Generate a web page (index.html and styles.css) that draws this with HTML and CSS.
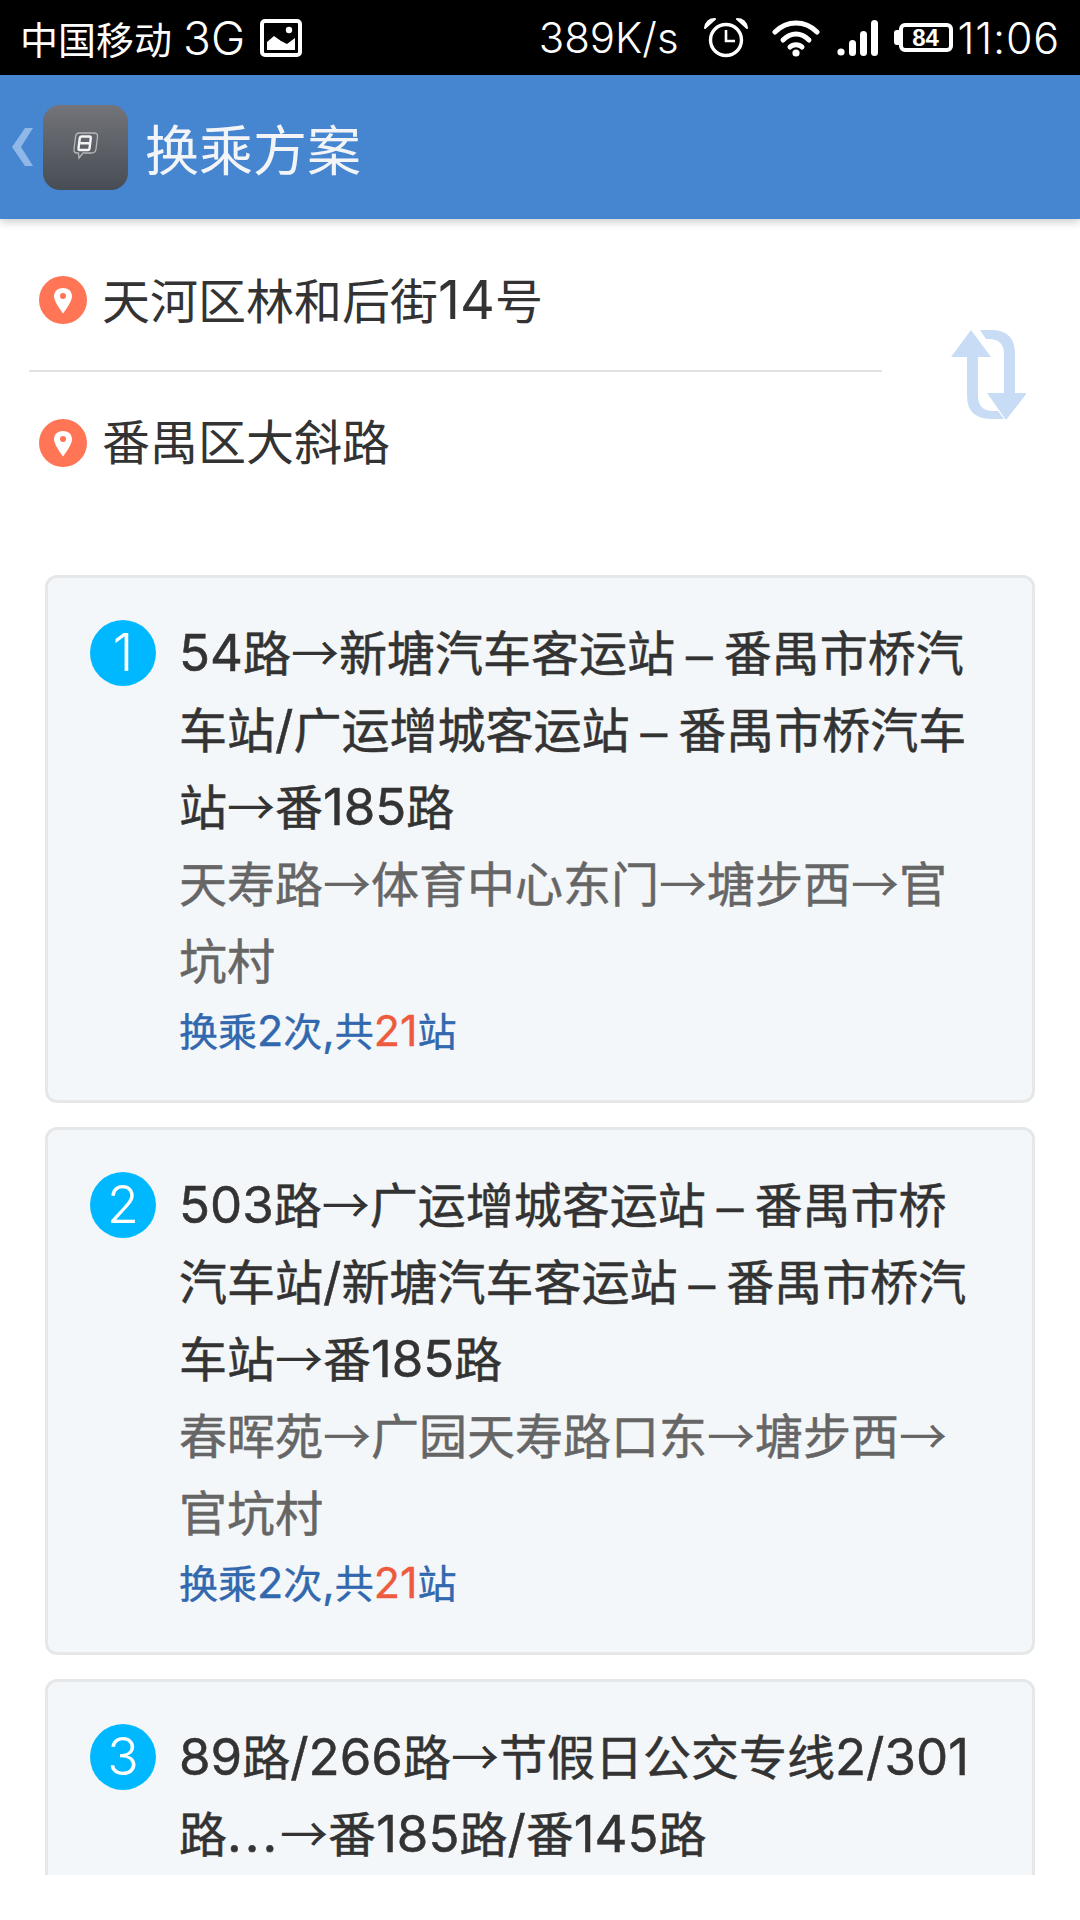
FILE: index.html
```html
<!DOCTYPE html>
<html lang="zh-CN">
<head>
<meta charset="utf-8">
<title>换乘方案</title>
<link rel="stylesheet" href="styles.css">
</head>
<body>
<div class="screen">
  <div class="status">
    <div class="status-left">
      <span class="carrier">中国移动</span>
      <span class="net">3G</span>
      <svg class="ic-img" viewBox="0 0 42 38"><rect x="2" y="2" width="38" height="34" rx="3" fill="none" stroke="#fff" stroke-width="4"/><circle cx="29" cy="11" r="3.200" fill="#fff"/><path d="M7 31V23l7-6 7 5 6 3 8-6v12z" fill="#fff"/></svg>
    </div>
    <div class="status-right">
      <span class="speed">389K/s</span>
      <svg class="ic-alarm" viewBox="0 0 46 40"><circle cx="23" cy="22" r="15.500" fill="none" stroke="#fff" stroke-width="3.400"/><path d="M23 12v11h9" fill="none" stroke="#fff" stroke-width="2.600"/><path d="M2 10C3 4 7 1 12 1zM44 10C43 4 39 1 34 1z" fill="#fff" stroke="#fff" stroke-width="2" stroke-linejoin="round"/></svg>
      <svg class="ic-wifi" viewBox="0 0 48 38"><g fill="none" stroke="#fff" stroke-width="5" stroke-linecap="round"><path d="M3 13C15 1 33 1 45 13"/><path d="M11 21C19 13 29 13 37 21"/><path d="M18 28C21 25 27 25 30 28"/></g><circle cx="24" cy="34" r="3.600" fill="#fff"/></svg>
      <svg class="ic-signal" viewBox="0 0 42 36"><circle cx="4" cy="32" r="3.600" fill="#fff"/><rect x="12" y="20" width="7" height="16" rx="3.500" fill="#fff"/><rect x="23" y="11" width="7" height="25" rx="3.500" fill="#fff"/><rect x="34" y="0" width="7" height="36" rx="3.500" fill="#fff"/></svg>
      <div class="battery"><span class="battery-level">84</span></div>
      <span class="time">11:06</span>
    </div>
  </div>

  <header class="appbar">
    <svg class="ic-back" viewBox="0 0 22 38"><path d="M13 0h8L9 19l12 19h-8L0 19z" fill="#8fb8e8"/></svg>
    <div class="logo">
      <svg class="logo-mark" viewBox="0 0 26 30"><path d="M6 1h15q4 0 3.500 4l-1.500 12q-.5 4-4.500 4H10l-4 5-.5-5H4q-3.500 0-3-4L2.500 5Q3 1 6 1z" fill="none" stroke="#b4b6ba" stroke-width="1.300"/><path d="M8.500 4.500h8q1.500 0 1.300 1.500l-1.300 10.500q-.2 1.500-1.700 1.500h-8q-1.500 0-1.300-1.500L6.800 6q.2-1.500 1.700-1.500zM7.500 11.200h9.500" fill="none" stroke="#f4f4f5" stroke-width="2.400"/></svg>
    </div>
    <h1 class="title">换乘方案</h1>
  </header>

  <section class="route">
    <div class="route-fields">
      <div class="field field-first">
        <svg class="pin" viewBox="0 0 48 48"><circle cx="24" cy="24" r="24" fill="#ff7555"/><path d="M24 12c-6 0-9 4-9 8.500 0 4.500 6 13 9 17 3-4 9-12.500 9-17C33 16 30 12 24 12z" fill="#fff"/><circle cx="24" cy="20" r="3" fill="#ff7555"/></svg>
        <span class="place">天河区林和后街<span class="lat">14</span>号</span>
      </div>
      <div class="field">
        <svg class="pin" viewBox="0 0 48 48"><circle cx="24" cy="24" r="24" fill="#ff7555"/><path d="M24 12c-6 0-9 4-9 8.500 0 4.500 6 13 9 17 3-4 9-12.500 9-17C33 16 30 12 24 12z" fill="#fff"/><circle cx="24" cy="20" r="3" fill="#ff7555"/></svg>
        <span class="place">番禺区大斜路</span>
      </div>
    </div>
    <svg class="ic-swap" viewBox="0 0 78 90"><path d="M23 0L43 27H30V66q0 14 14 15h6l6 8H42Q19 88 19 66V27H3z" fill="#c8ddf5"/><path d="M32 0H45Q67 1 67 24V63H79L58 90 39 63H56V24q0-14-14-15h-4z" fill="#c8ddf5"/></svg>
  </section>

  <main class="plans">
    <article class="card">
      <div class="num">1</div>
      <div class="body">
        <p class="lines"><span class="lat">54</span>路<span class="arr">→</span>新塘汽车客运站<span class="dash">–</span>番禺市桥汽车站<span class="lat">/</span>广运增城客运站<span class="dash">–</span>番禺市桥汽车站<span class="arr">→</span>番<span class="lat">185</span>路</p>
        <p class="stops">天寿路<span class="arr">→</span>体育中心东门<span class="arr">→</span>塘步西<span class="arr">→</span>官坑村</p>
        <p class="meta">换乘<span class="lat">2</span>次<span class="lat">,</span>共<span class="lat count">21</span>站</p>
      </div>
    </article>
    <article class="card">
      <div class="num">2</div>
      <div class="body">
        <p class="lines"><span class="lat">503</span>路<span class="arr">→</span>广运增城客运站<span class="dash">–</span>番禺市桥汽车站<span class="lat">/</span>新塘汽车客运站<span class="dash">–</span>番禺市桥汽车站<span class="arr">→</span>番<span class="lat">185</span>路</p>
        <p class="stops">春晖苑<span class="arr">→</span>广园天寿路口东<span class="arr">→</span>塘步西<span class="arr">→</span>官坑村</p>
        <p class="meta">换乘<span class="lat">2</span>次<span class="lat">,</span>共<span class="lat count">21</span>站</p>
      </div>
    </article>
    <article class="card">
      <div class="num">3</div>
      <div class="body">
        <p class="lines"><span class="lat">89</span>路<span class="lat">/266</span>路<span class="arr">→</span>节假日公交专线<span class="lat">2/301</span>路<span class="lat dots">...</span><span class="arr">→</span>番<span class="lat">185</span>路<span class="lat">/</span>番<span class="lat">145</span>路</p>
      </div>
    </article>
  </main>
</div>
</body>
</html>
```
FILE: styles.css
```css
* { box-sizing: border-box; }
html, body { margin: 0; padding: 0; background: #fff; }
body { font-family: "Liberation Sans", "Noto Sans CJK SC", sans-serif; color: #333; }
.screen { height: 1875px; overflow: hidden; }

.status { height: 75px; background: #000; color: #fff; display: flex; justify-content: space-between; align-items: center; padding: 0 20px 0 20px; font-family: "Inter", "Noto Sans CJK SC", sans-serif; font-weight: 300; font-size: 42px; }
.status-left, .status-right { display: flex; align-items: center; }
.carrier { font-size: 38px; font-weight: 400; }
.net { font-size: 46px; margin-left: 11px; }
.ic-img { width: 42px; height: 38px; margin-left: 15px; }
.ic-alarm { width: 46px; height: 40px; margin-left: 24px; }
.ic-wifi { width: 48px; height: 38px; margin-left: 23px; }
.ic-signal { width: 42px; height: 36px; margin-left: 17px; }
.battery { width: 54px; height: 29px; margin-left: 20px; margin-right: 5px; border: 4px solid #fff; border-radius: 6px; display: flex; align-items: center; justify-content: center; position: relative; }
.battery::before { content: ""; position: absolute; left: -9px; top: 3px; width: 5px; height: 15px; background: #fff; border-radius: 3px 0 0 3px; }
.battery-level { font-family: "Liberation Sans", sans-serif; font-weight: 700; font-size: 24px; line-height: 21px; }
.time { font-size: 43px; letter-spacing: .8px; }

.appbar { height: 144px; background: #4685cf; display: flex; align-items: center; padding-left: 12px; box-shadow: 0 3px 8px rgba(0,0,0,.2); }
.ic-back { width: 22px; height: 38px; }
.logo { width: 85px; height: 85px; margin-left: 9px; border-radius: 17px; background: linear-gradient(#727479, #484c54); display: flex; align-items: center; justify-content: center; }
.logo-mark { width: 26px; height: 30px; }
.title { margin: 0 0 0 17px; font-size: 54px; font-weight: 400; color: #f2f4f7; }

.route { display: flex; align-items: center; padding: 11px 0 0 29px; }
.route-fields { width: 853px; }
.field { height: 142px; display: flex; align-items: center; gap: 15px; padding-left: 10px; font-size: 48px; color: #333; }
.field-first { height: 142px; border-bottom: 2px solid #e2e2e2; }
.pin { width: 48px; height: 48px; flex: none; }
.place { line-height: 1; padding-top: 1px; }
.field-first .place { padding-top: 6px; }
.ic-swap { width: 78px; height: 90px; margin: 5px 0 0 66px; }

.plans { margin: 61px 45px 0; display: flex; flex-direction: column; gap: 24px; }
.card { display: flex; min-height: 528px; flex: none; background: #f4f7f9; border: 3px solid #e5e7e8; border-radius: 12px; padding: 38px 42px 35px 42px; gap: 23px; }
.num { flex: none; width: 66px; height: 66px; margin-top: 4px; border-radius: 50%; background: #00b8ff; color: #fff; font-family: "Inter", sans-serif; font-weight: 300; font-size: 52px; line-height: 66px; text-align: center; }
.body { flex: 1; min-width: 0; }
.body p { margin: 0; }
.lines { font-size: 48px; line-height: 77px; color: #333; -webkit-text-stroke: .5px currentColor; }
.stops { font-size: 48px; line-height: 77px; color: #666; -webkit-text-stroke: .5px currentColor; }
.meta { font-size: 39px; line-height: 64px; color: #3168ae; -webkit-text-stroke: .4px currentColor; }
.lat { font-family: "Inter", "Liberation Sans", sans-serif; font-size: 51px; line-height: 0; }
.place .lat { font-size: 54px; }
.meta .lat { font-size: 43px; }
.dots { letter-spacing: 3px; }
.arr { font-family: "Noto Sans CJK SC", sans-serif; line-height: 0; -webkit-text-stroke: 0; }
.dash { margin: 0 11px; line-height: 0; }
.count { color: #ed5a3e; }
```
